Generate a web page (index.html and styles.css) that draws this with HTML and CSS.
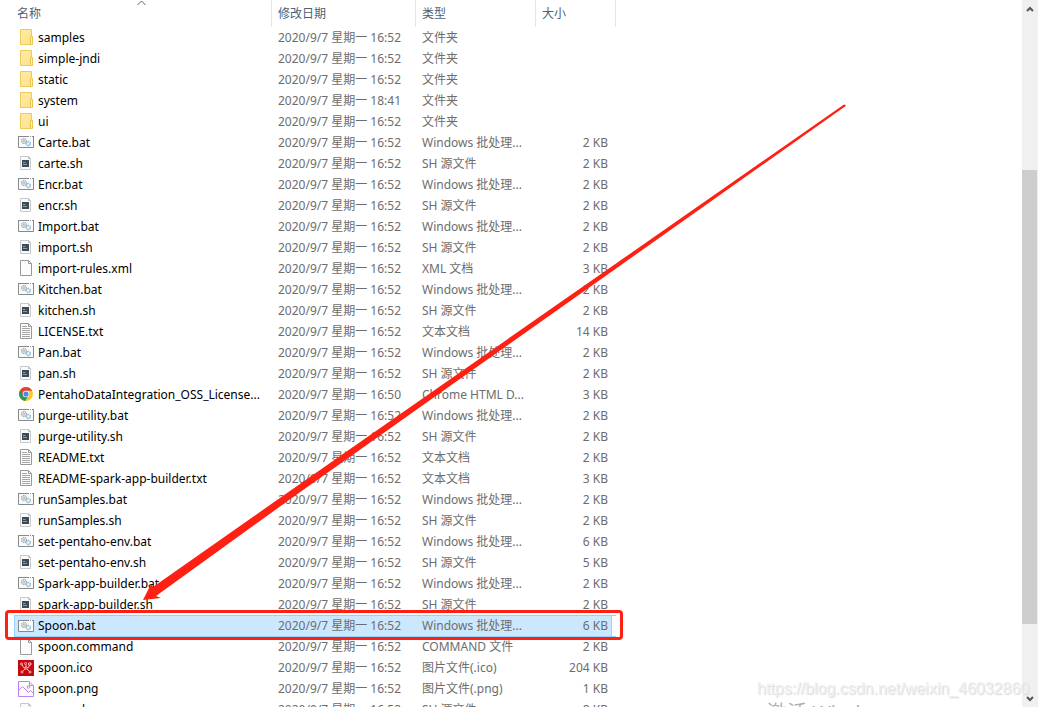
FILE: index.html
```html
<!DOCTYPE html>
<html lang="zh-CN">
<head>
<meta charset="utf-8">
<title>data-integration</title>
<link rel="stylesheet" href="styles.css">
</head>
<body>
<svg class="sprite" aria-hidden="true">
  <defs>
    <linearGradient id="fold" x1="0" y1="0" x2="1" y2="1"><stop offset="0" stop-color="#ffeba6"/><stop offset="1" stop-color="#ffe08a"/></linearGradient>
    <symbol id="folder" viewBox="0 0 16 16">
      <path d="M2.500 .5h11v15h-11z" fill="url(#fold)" stroke="#eccb56"/>
      <path d="M12.500 15.500V7.500h2v8z" fill="#fff0b5" stroke="#e9c650"/>
    </symbol>
    <symbol id="bat" viewBox="0 0 16 16">
      <path d="M.5 2.500h15v11H.5z" fill="#fafafa" stroke="#858a8f"/>
      <path d="M0 2.500h16" stroke="#858a8f"/>
      <path d="M11 2.500h1M13 2.500h1" stroke="#fff"/>
      <circle cx="6" cy="7" r="2.600" fill="#e4e4e4" stroke="#909497" stroke-dasharray="1.200 .6"/>
      <circle cx="6" cy="7" r=".9" fill="#fff" stroke="#909497" stroke-width=".6"/>
      <circle cx="10.300" cy="9.600" r="2.200" fill="#c9e8f7" stroke="#6fa6c4" stroke-dasharray="1.200 .6"/>
      <circle cx="10.300" cy="9.600" r=".7" fill="#fff"/>
    </symbol>
    <symbol id="sh" viewBox="0 0 16 16">
      <path d="M2.500 1.500h8l2 2v11h-10z" fill="#fafafa" stroke="#c9c9c9"/>
      <path d="M10.500 1.500v2h2z" fill="#d5d5d5" stroke="#b5b5b5" stroke-width=".7"/>
      <path d="M4 5h7v7H4z" fill="#3c4a55"/>
      <path d="M5 7.500h2.500M5 9.500h4" stroke="#a5b2ba" stroke-width=".8"/>
    </symbol>
    <symbol id="blank" viewBox="0 0 16 16">
      <path d="M2.500 .5h8l3 3v12h-11z" fill="#fcfcfc" stroke="#999"/>
      <path d="M10.500 .5v3h3" fill="none" stroke="#999"/>
    </symbol>
    <symbol id="txt" viewBox="0 0 16 16">
      <use href="#blank"/>
      <path d="M4 3.500h5M4 5.500h8M4 7.500h8M4 9.500h8M4 11.500h8M4 13.500h8" stroke="#a5a5a5"/>
    </symbol>
    <symbol id="chrome" viewBox="0 0 16 16">
      <circle cx="8" cy="8" r="7" fill="#fbc928"/>
      <path d="M8 8 1.940 4.500A7 7 0 0 0 7 14.930L10.800 9.500z" fill="#249a55"/>
      <path d="M1.940 4.500A7 7 0 0 1 14.200 4.800H8L5 9.700z" fill="#e04436"/>
      <circle cx="8" cy="8" r="3.300" fill="#fff"/>
      <circle cx="8" cy="8" r="2.600" fill="#4688f1"/>
    </symbol>
    <symbol id="ico" viewBox="0 0 16 16">
      <path d="M0 0h16v16H0z" fill="#c80810"/>
      <g fill="none" stroke="#ffc9c9" stroke-width=".9"><circle cx="3.500" cy="4" r="1"/><circle cx="7.500" cy="3.500" r="1"/><path d="M10.500 3h2.500v2h-2.500z"/><circle cx="4" cy="12" r="1"/><circle cx="12" cy="12" r="1"/><circle cx="8" cy="8" r="1.200"/><path d="M8 4.500V7M7 9l-2 2M9 9l2 2M4.300 5 5.500 7.500h1.300M11.700 5 10.500 7.500H9.200"/></g>
    </symbol>
    <symbol id="png" viewBox="0 0 16 16">
      <path d="M.5 .5H11L15.500 5v10.500H.5z" fill="#fff" stroke="#b982f5"/>
      <path d="M11.500 .5v4h4M.5 9.500l4-4 6 6 2-2 3 3" fill="none" stroke="#b982f5"/>
      <circle cx="10.500" cy="6" r="1.300" fill="#fff" stroke="#b982f5"/>
    </symbol>
  </defs>
</svg>
<div class="window">
<main class="files">
<table class="list">
<colgroup><col class="c-name"><col class="c-date"><col class="c-type"><col class="c-size"></colgroup>
<thead><tr><th scope="col" aria-sort="ascending">名称<svg class="sort" viewBox="0 0 9 6"><path d="M.5 5l4-4 4 4"/></svg></th><th scope="col">修改日期</th><th scope="col">类型</th><th scope="col">大小</th></tr></thead>
<tbody>
<tr><td><svg><use href="#folder"/></svg>samples</td><td>2020/9/7 星期一 16:52</td><td>文件夹</td><td></td></tr>
<tr><td><svg><use href="#folder"/></svg>simple-jndi</td><td>2020/9/7 星期一 16:52</td><td>文件夹</td><td></td></tr>
<tr><td><svg><use href="#folder"/></svg>static</td><td>2020/9/7 星期一 16:52</td><td>文件夹</td><td></td></tr>
<tr><td><svg><use href="#folder"/></svg>system</td><td>2020/9/7 星期一 18:41</td><td>文件夹</td><td></td></tr>
<tr><td><svg><use href="#folder"/></svg>ui</td><td>2020/9/7 星期一 16:52</td><td>文件夹</td><td></td></tr>
<tr><td><svg><use href="#bat"/></svg>Carte.bat</td><td>2020/9/7 星期一 16:52</td><td>Windows 批处理...</td><td>2 KB</td></tr>
<tr><td><svg><use href="#sh"/></svg>carte.sh</td><td>2020/9/7 星期一 16:52</td><td>SH 源文件</td><td>2 KB</td></tr>
<tr><td><svg><use href="#bat"/></svg>Encr.bat</td><td>2020/9/7 星期一 16:52</td><td>Windows 批处理...</td><td>2 KB</td></tr>
<tr><td><svg><use href="#sh"/></svg>encr.sh</td><td>2020/9/7 星期一 16:52</td><td>SH 源文件</td><td>2 KB</td></tr>
<tr><td><svg><use href="#bat"/></svg>Import.bat</td><td>2020/9/7 星期一 16:52</td><td>Windows 批处理...</td><td>2 KB</td></tr>
<tr><td><svg><use href="#sh"/></svg>import.sh</td><td>2020/9/7 星期一 16:52</td><td>SH 源文件</td><td>2 KB</td></tr>
<tr><td><svg><use href="#blank"/></svg>import-rules.xml</td><td>2020/9/7 星期一 16:52</td><td>XML 文档</td><td>3 KB</td></tr>
<tr><td><svg><use href="#bat"/></svg>Kitchen.bat</td><td>2020/9/7 星期一 16:52</td><td>Windows 批处理...</td><td>2 KB</td></tr>
<tr><td><svg><use href="#sh"/></svg>kitchen.sh</td><td>2020/9/7 星期一 16:52</td><td>SH 源文件</td><td>2 KB</td></tr>
<tr><td><svg><use href="#txt"/></svg>LICENSE.txt</td><td>2020/9/7 星期一 16:52</td><td>文本文档</td><td>14 KB</td></tr>
<tr><td><svg><use href="#bat"/></svg>Pan.bat</td><td>2020/9/7 星期一 16:52</td><td>Windows 批处理...</td><td>2 KB</td></tr>
<tr><td><svg><use href="#sh"/></svg>pan.sh</td><td>2020/9/7 星期一 16:52</td><td>SH 源文件</td><td>2 KB</td></tr>
<tr><td><svg><use href="#chrome"/></svg>PentahoDataIntegration_OSS_License...</td><td>2020/9/7 星期一 16:50</td><td>Chrome HTML D...</td><td>3 KB</td></tr>
<tr><td><svg><use href="#bat"/></svg>purge-utility.bat</td><td>2020/9/7 星期一 16:52</td><td>Windows 批处理...</td><td>2 KB</td></tr>
<tr><td><svg><use href="#sh"/></svg>purge-utility.sh</td><td>2020/9/7 星期一 16:52</td><td>SH 源文件</td><td>2 KB</td></tr>
<tr><td><svg><use href="#txt"/></svg>README.txt</td><td>2020/9/7 星期一 16:52</td><td>文本文档</td><td>2 KB</td></tr>
<tr><td><svg><use href="#txt"/></svg>README-spark-app-builder.txt</td><td>2020/9/7 星期一 16:52</td><td>文本文档</td><td>3 KB</td></tr>
<tr><td><svg><use href="#bat"/></svg>runSamples.bat</td><td>2020/9/7 星期一 16:52</td><td>Windows 批处理...</td><td>2 KB</td></tr>
<tr><td><svg><use href="#sh"/></svg>runSamples.sh</td><td>2020/9/7 星期一 16:52</td><td>SH 源文件</td><td>2 KB</td></tr>
<tr><td><svg><use href="#bat"/></svg>set-pentaho-env.bat</td><td>2020/9/7 星期一 16:52</td><td>Windows 批处理...</td><td>6 KB</td></tr>
<tr><td><svg><use href="#sh"/></svg>set-pentaho-env.sh</td><td>2020/9/7 星期一 16:52</td><td>SH 源文件</td><td>5 KB</td></tr>
<tr><td><svg><use href="#bat"/></svg>Spark-app-builder.bat</td><td>2020/9/7 星期一 16:52</td><td>Windows 批处理...</td><td>2 KB</td></tr>
<tr><td><svg><use href="#sh"/></svg>spark-app-builder.sh</td><td>2020/9/7 星期一 16:52</td><td>SH 源文件</td><td>2 KB</td></tr>
<tr class="selected" aria-selected="true"><td><svg><use href="#bat"/></svg>Spoon.bat</td><td>2020/9/7 星期一 16:52</td><td>Windows 批处理...</td><td>6 KB</td></tr>
<tr><td><svg><use href="#blank"/></svg>spoon.command</td><td>2020/9/7 星期一 16:52</td><td>COMMAND 文件</td><td>2 KB</td></tr>
<tr><td><svg><use href="#ico"/></svg>spoon.ico</td><td>2020/9/7 星期一 16:52</td><td>图片文件(.ico)</td><td>204 KB</td></tr>
<tr><td><svg><use href="#png"/></svg>spoon.png</td><td>2020/9/7 星期一 16:52</td><td>图片文件(.png)</td><td>1 KB</td></tr>
<tr><td><svg><use href="#sh"/></svg>spoon.sh</td><td>2020/9/7 星期一 16:52</td><td>SH 源文件</td><td>8 KB</td></tr>
</tbody>
</table>
</main>
<div class="scrollbar">
  <button type="button" aria-label="向上滚动"><svg viewBox="0 0 8 6"><path d="M1 5l3-3 3 3"/></svg></button>
  <div class="track"><div class="thumb"></div></div>
  <button type="button" aria-label="向下滚动"><svg viewBox="0 0 8 6"><path d="M1 1l3 3 3-3"/></svg></button>
</div>
<div class="highlight"></div>
<svg class="arrow" viewBox="0 0 720 510"><path d="M714 14.500Q717 15 715 16.500L159 410 26 506l5 2-18 2 8-16 2 3 124-87z"/></svg>
<div class="activate">激活 Windows</div>
<div class="watermark">https://blog.csdn.net/weixin_46032860</div>
</div>
</body>
</html>
```
FILE: styles.css
```css
* { box-sizing: border-box; }

body {
  margin: 0;
  background: #fff;
  color: #6d6d6d;
  font: 12px/20px "Noto Sans", "Noto Sans CJK SC", sans-serif;
}

.sprite { position: absolute; width: 0; height: 0; }

.window {
  position: relative;
  display: flex;
  height: 100vh;
  overflow: hidden;
}

.files { flex: 1; min-width: 0; overflow: hidden; padding-left: 14px; }

.list {
  table-layout: fixed;
  width: 602px;
  border-collapse: separate;
  border-spacing: 0;
}

.c-name { width: 258px; }
.c-date { width: 144px; }
.c-type { width: 120px; }
.c-size { width: 80px; }

th, td { padding: 0 0 0 6px; white-space: nowrap; text-align: left; }

th {
  position: relative;
  height: 27px;
  border-right: 1px solid #e5e5e5;
  color: #4c607a;
  font-weight: 400;
}

th:first-child { padding-left: 3px; }

.sort {
  position: absolute;
  top: 0;
  left: 123px;
  width: 9px;
  height: 6px;
  fill: none;
  stroke: #606060;
}

td { height: 21px; }
td:first-child { padding-left: 4px; color: #000; }
td:last-child { padding: 0 8px 0 0; text-align: right; }

td svg {
  width: 16px;
  height: 16px;
  margin: 0 4px 2px 0;
  vertical-align: middle;
}

.selected td {
  background: #cce8ff;
  border: solid #99d1ff;
  border-width: 1px 0;
  line-height: 19px;
}

.selected td:first-child { box-shadow: inset 1px 0 #99d1ff; }
.selected td:last-child { box-shadow: inset -4px 0 #fff, inset -5px 0 #99d1ff; }

.scrollbar {
  display: flex;
  flex-direction: column;
  width: 16px;
  background: #f0f0f0;
}

.scrollbar button {
  display: flex;
  align-items: center;
  justify-content: center;
  height: 17px;
  padding: 0;
  border: 0;
  background: none;
}

.scrollbar svg {
  width: 8px;
  height: 6px;
  fill: none;
  stroke: #555;
  stroke-width: 2;
}

.track { flex: 1; padding-top: 153px; }
.thumb { width: 15px; height: 454px; background: #cdcdcd; }

.highlight {
  position: absolute;
  top: 610px;
  left: 5px;
  width: 618px;
  height: 30px;
  border: 3px solid #ff2014;
  border-radius: 4px;
}

.arrow {
  position: absolute;
  top: 90px;
  left: 130px;
  width: 720px;
  height: 510px;
  fill: #ff2014;
}

.activate {
  position: absolute;
  top: 699px;
  left: 767px;
  color: #b0b0b0;
  font-size: 20px;
  line-height: 28px;
}

.watermark {
  position: absolute;
  top: 679px;
  left: 757px;
  color: #f0f0f0;
  font: 16px/20px "Liberation Sans", sans-serif;
  text-shadow: 1px 1px 1px #d8d8d8;
}
```
